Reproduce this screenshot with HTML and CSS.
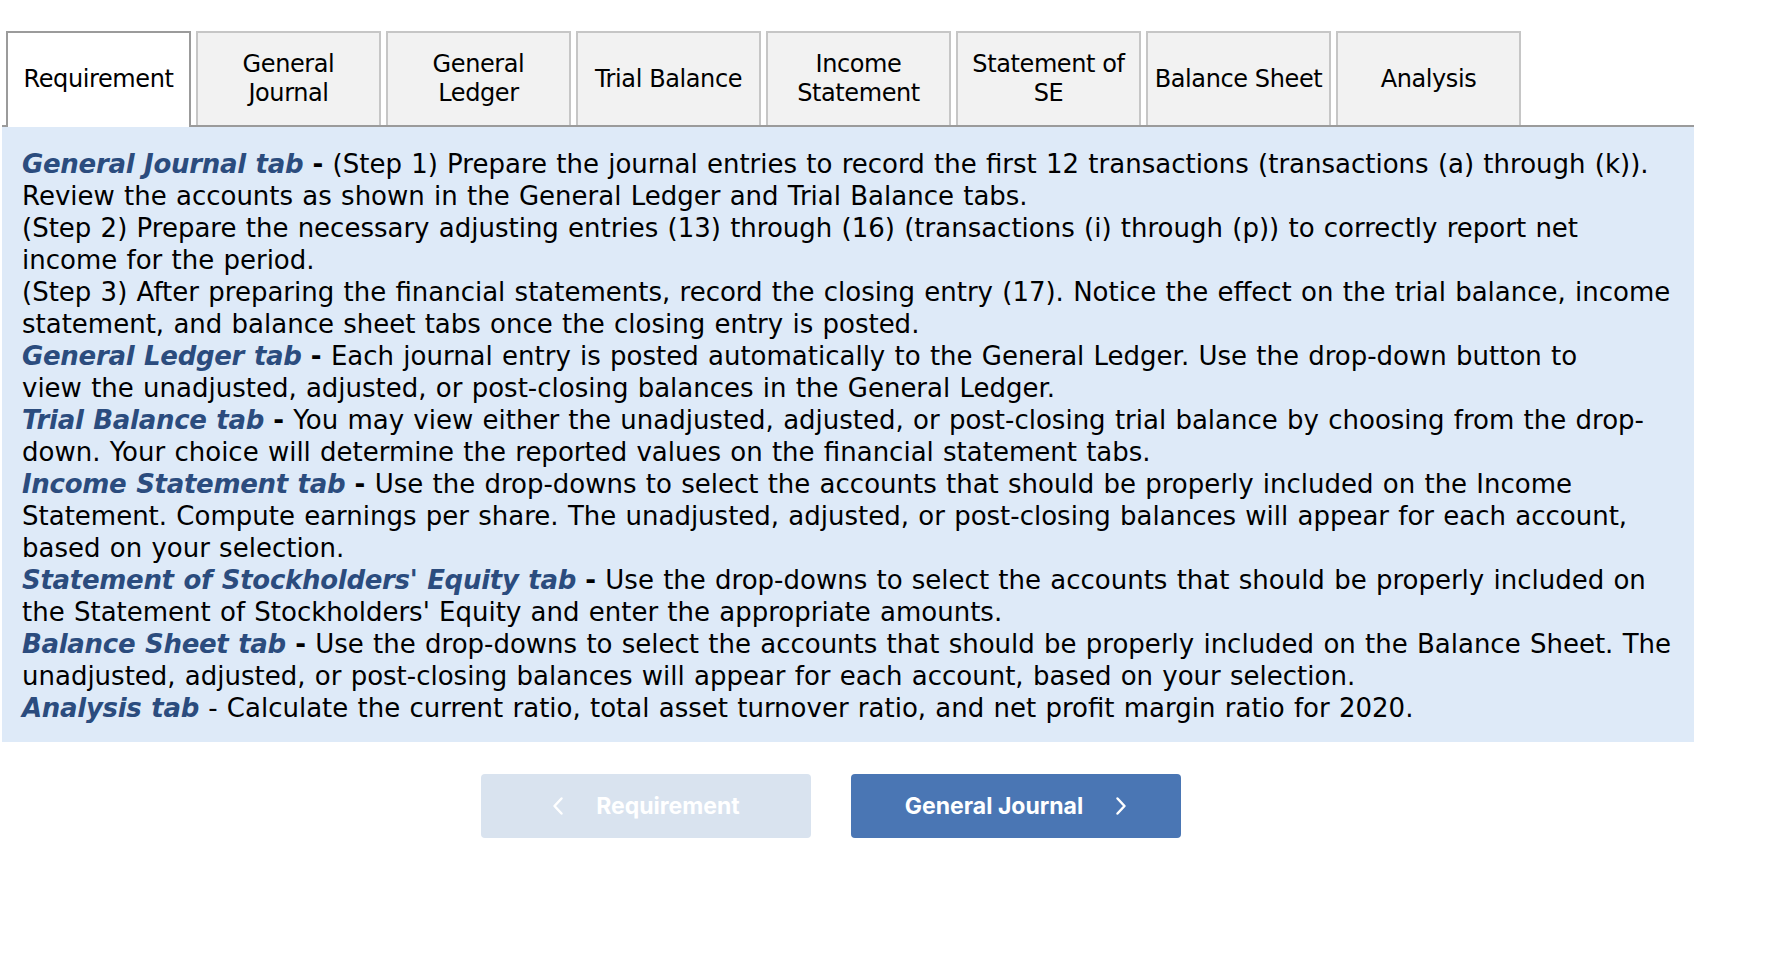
FILE: index.html
```html
<!DOCTYPE html>
<html>

<head>
    <title>Requirement</title>
    <meta charset="UTF-8">
    <link rel="stylesheet" href="styles.css">
</head>

<body>
    <div class="page">
        <ul class="tabs">
            <li class="tab active">Requirement</li>
            <li class="tab">General<br>Journal</li>
            <li class="tab">General<br>Ledger</li>
            <li class="tab">Trial Balance</li>
            <li class="tab">Income<br>Statement</li>
            <li class="tab">Statement of<br>SE</li>
            <li class="tab">Balance Sheet</li>
            <li class="tab">Analysis</li>
        </ul>

        <div class="panel">
            <p>
                <b class="hd">General Journal tab</b> <b>-</b> (Step 1) Prepare the journal entries to record the first 12 transactions (transactions (a) through (k)).<br>
                Review the accounts as shown in the General Ledger and Trial Balance tabs.<br>
                (Step 2) Prepare the necessary adjusting entries (13) through (16) (transactions (i) through (p)) to correctly report net<br>
                income for the period.<br>
                (Step 3) After preparing the financial statements, record the closing entry (17). Notice the effect on the trial balance, income<br>
                statement, and balance sheet tabs once the closing entry is posted.
            </p>
            <p>
                <b class="hd">General Ledger tab</b> <b>-</b> Each journal entry is posted automatically to the General Ledger. Use the drop-down button to<br>
                view the unadjusted, adjusted, or post-closing balances in the General Ledger.
            </p>
            <p>
                <b class="hd">Trial Balance tab</b> <b>-</b> You may view either the unadjusted, adjusted, or post-closing trial balance by choosing from the drop-<br>
                down. Your choice will determine the reported values on the financial statement tabs.
            </p>
            <p>
                <b class="hd">Income Statement tab</b> <b>-</b> Use the drop-downs to select the accounts that should be properly included on the Income<br>
                Statement. Compute earnings per share. The unadjusted, adjusted, or post-closing balances will appear for each account,<br>
                based on your selection.
            </p>
            <p>
                <b class="hd">Statement of Stockholders' Equity tab</b> <b>-</b> Use the drop-downs to select the accounts that should be properly included on<br>
                the Statement of Stockholders' Equity and enter the appropriate amounts.
            </p>
            <p>
                <b class="hd">Balance Sheet tab</b> <b>-</b> Use the drop-downs to select the accounts that should be properly included on the Balance Sheet. The<br>
                unadjusted, adjusted, or post-closing balances will appear for each account, based on your selection.
            </p>
            <p>
                <b class="hd">Analysis tab</b> - Calculate the current ratio, total asset turnover ratio, and net profit margin ratio for 2020.
            </p>
        </div>

        <div class="nav">
            <button class="nav-btn prev" disabled>
                <svg class="chev" width="12" height="20" viewBox="0 0 12 20"><polyline points="9.5,2.5 2.5,10 9.5,17.5" /></svg>
                <span>Requirement</span>
            </button>
            <button class="nav-btn next">
                <span>General Journal</span>
                <svg class="chev" width="12" height="20" viewBox="0 0 12 20"><polyline points="2.5,2.5 9.5,10 2.5,17.5" /></svg>
            </button>
        </div>
    </div>
</body>

</html>
```

FILE: styles.css
```css
body {
    margin: 0;
    background-color: #ffffff;
    font-family: "DejaVu Sans", Verdana, sans-serif;
    color: #000000;
}

.page {
    width: 1692px;
    padding: 31px 0 0 2px;
}

/* tab strip */
.tabs {
    list-style: none;
    margin: 0 0 -2px 4px;
    padding: 0;
    display: flex;
    align-items: flex-start;
    gap: 5px;
}

.tab {
    width: 185px;
    height: 94px;
    box-sizing: border-box;
    border: 2px solid #c6c6c6;
    border-bottom: none;
    background-color: #f2f2f2;
    display: flex;
    flex-direction: column;
    align-items: center;
    justify-content: center;
    text-align: center;
    font-size: 24px;
    line-height: 29px;
    letter-spacing: -0.4px;
    white-space: nowrap;
}

.tab.active {
    height: 96px;
    padding-bottom: 2px;
    border-color: #9b9b9b;
    background-color: #ffffff;
    position: relative;
    z-index: 1;
}

/* requirement text */
.panel {
    box-sizing: border-box;
    width: 1692px;
    padding: 21px 20px 18px;
    background-color: #deeaf8;
    border-top: 2px solid #9b9b9b;
    font-size: 26px;
    line-height: 32px;
    word-spacing: 1px;
    white-space: nowrap;
}

.panel p {
    margin: 0;
}

.hd {
    font-style: italic;
    color: #2b4c7e;
    letter-spacing: -0.3px;
}

/* prev / next */
.nav {
    display: flex;
    gap: 40px;
    margin: 32px 0 0 479px;
}

.nav-btn {
    width: 330px;
    height: 64px;
    border: none;
    border-radius: 4px;
    display: flex;
    align-items: center;
    justify-content: center;
    gap: 32px;
    font-family: Inter, "Liberation Sans", sans-serif;
    font-weight: 700;
    font-size: 23px;
    color: #ffffff;
    padding: 0;
}

.nav-btn.prev {
    background-color: #d9e3ef;
}

.nav-btn.next {
    background-color: #4a76b4;
}

.chev polyline {
    fill: none;
    stroke: #ffffff;
    stroke-width: 2.5;
    stroke-linecap: round;
    stroke-linejoin: round;
}
```
